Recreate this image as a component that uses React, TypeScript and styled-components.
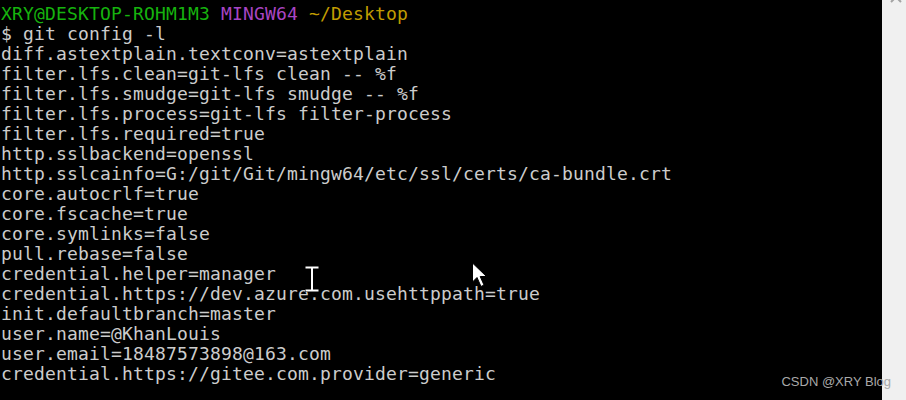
import React from "react";
import styled, { createGlobalStyle } from "styled-components";

const Global = createGlobalStyle`
  html, body { margin: 0; padding: 0; background: #000; overflow: hidden; }
  #root { width: 906px; height: 400px; }
`;

const Window = styled.div`
  position: relative;
  display: flex;
  width: 906px;
  height: 400px;
  overflow: hidden;
`;

const Terminal = styled.div`
  flex: 0 0 882px;
  background: #000;
  padding: 4px 0 0 1px;
  box-sizing: border-box;
  font-family: "DejaVu Sans Mono", monospace;
  font-size: 18px;
  letter-spacing: 0.164px;
  line-height: 20px;
  color: #cccccc;
  white-space: pre;
`;

const Line = styled.div`
  height: 20px;
`;

const Seg = styled.span<{ $c: string }>`
  color: ${(p) => p.$c};
`;

const Scrollbar = styled.div`
  position: relative;
  flex: 1;
  background: #f0f0f0;
`;

const ArrowUp = styled.svg`
  position: absolute;
  top: -6px;
  left: 8px;
`;

const Cursor = styled.svg<{ $x: number; $y: number }>`
  position: absolute;
  left: ${(p) => p.$x}px;
  top: ${(p) => p.$y}px;
`;

const Watermark = styled.div`
  position: absolute;
  right: 15px;
  top: 374px;
  font-family: "Liberation Sans", Arial, sans-serif;
  font-size: 13px;
  line-height: 16px;
  color: #a9a9a9;
  white-space: nowrap;
`;

const lines = [
  "$ git config -l",
  "diff.astextplain.textconv=astextplain",
  "filter.lfs.clean=git-lfs clean -- %f",
  "filter.lfs.smudge=git-lfs smudge -- %f",
  "filter.lfs.process=git-lfs filter-process",
  "filter.lfs.required=true",
  "http.sslbackend=openssl",
  "http.sslcainfo=G:/git/Git/mingw64/etc/ssl/certs/ca-bundle.crt",
  "core.autocrlf=true",
  "core.fscache=true",
  "core.symlinks=false",
  "pull.rebase=false",
  "credential.helper=manager",
  "credential.https://dev.azure.com.usehttppath=true",
  "init.defaultbranch=master",
  "user.name=@KhanLouis",
  "user.email=18487573898@163.com",
  "credential.https://gitee.com.provider=generic",
];

export default function App() {
  return (
    <>
      <Global />
      <Window>
        <Terminal>
          <Line>
            <Seg $c="#16b30e">XRY@DESKTOP-ROHM1M3</Seg>{" "}
            <Seg $c="#a845c4">MINGW64</Seg>{" "}
            <Seg $c="#c19c00">~/Desktop</Seg>
          </Line>
          {lines.map((l, i) => (
            <Line key={i}>{l}</Line>
          ))}
        </Terminal>
        <Scrollbar>
          <ArrowUp width="12" height="10" viewBox="0 0 12 10">
            <path d="M1 8 L6 3 L11 8" fill="none" stroke="#a3a3a3" strokeWidth="2" />
          </ArrowUp>
        </Scrollbar>
        <Cursor $x={305} $y={266} width="15" height="26" viewBox="0 0 15 26">
          <path d="M0 1.5 H14 M7 1.5 V24.5 M0 24.5 H14" stroke="#000" strokeWidth="4" fill="none" />
          <path d="M0.5 1.5 H13.5 M7 1.5 V24.5 M0.5 24.5 H13.5" stroke="#fff" strokeWidth="2" fill="none" />
        </Cursor>
        <Cursor $x={471} $y={262} width="20" height="28" viewBox="0 0 20 28">
          <path
            d="M1.5 1 L1.5 20 L6 15.5 L10 24.5 L13 23 L9.2 14.5 L15.5 14.5 Z"
            fill="#fff"
            stroke="#000"
            strokeWidth="1"
            strokeLinejoin="miter"
          />
        </Cursor>
        <Watermark>CSDN @XRY Blog</Watermark>
      </Window>
    </>
  );
}
